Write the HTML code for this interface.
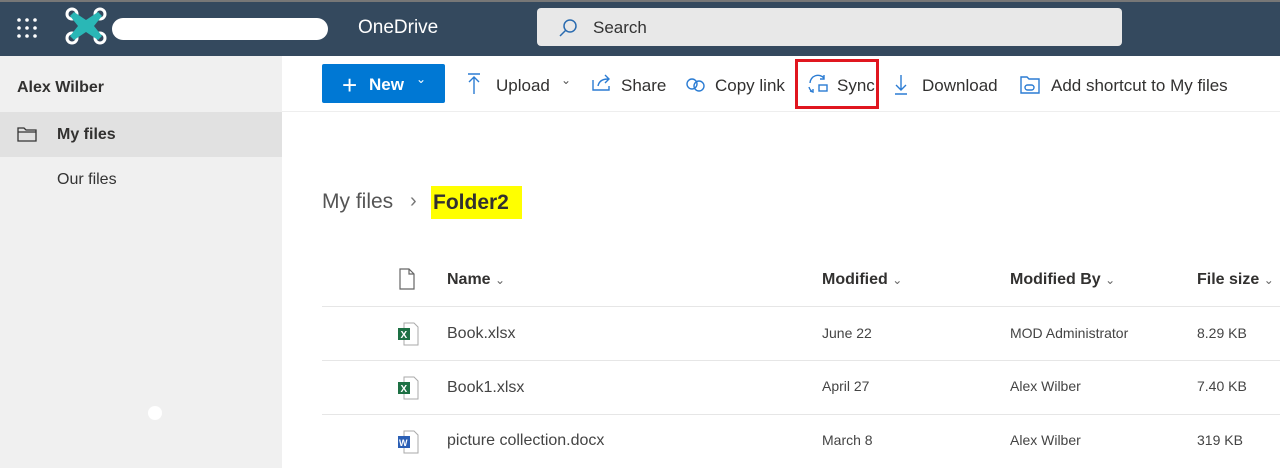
<!DOCTYPE html>
<html><head><style>
*{margin:0;padding:0;box-sizing:border-box}
body{width:1280px;height:468px;overflow:hidden;font-family:"Liberation Sans",sans-serif;background:#fff;position:relative;color:#323130}
.hdr{position:absolute;left:0;top:0;width:1280px;height:56px;background:#34495e;border-top:2px solid #777}
.abs{position:absolute;white-space:nowrap}
.side{position:absolute;left:0;top:56px;width:282px;height:412px;background:#f0f0f0}
.tb{font-size:17px;color:#323130}
.th{font-size:16px;font-weight:bold;color:#323130}
.td{font-size:14px;color:#444}
.line{position:absolute;left:322px;width:958px;height:1px;background:#e6e6e6}
</style></head><body>
<div class="hdr"></div>
<svg class="abs" style="left:16px;top:17px" width="22" height="22"><g fill="#fff"><circle cx="3" cy="3" r="1.8"/><circle cx="11" cy="3" r="1.8"/><circle cx="19" cy="3" r="1.8"/><circle cx="3" cy="11" r="1.8"/><circle cx="11" cy="11" r="1.8"/><circle cx="19" cy="11" r="1.8"/><circle cx="3" cy="19" r="1.8"/><circle cx="11" cy="19" r="1.8"/><circle cx="19" cy="19" r="1.8"/></g></svg>
<svg class="abs" style="left:64px;top:6px" width="44" height="40"><g fill="none" stroke="#fff" stroke-width="3"><circle cx="8" cy="8" r="5"/><circle cx="36" cy="8" r="5"/><circle cx="8" cy="32" r="5"/><circle cx="36" cy="32" r="5"/></g><path d="M10 6 L22 14 L34 6 L38 10 L30 20 L38 30 L34 34 L22 26 L10 34 L6 30 L14 20 L6 10Z" fill="#2ab7b6"/></svg>
<div class="abs" style="left:112px;top:18px;width:216px;height:22px;background:#fff;border-radius:11px"></div>
<div class="abs" style="left:358px;top:17px;font-size:19px;color:#fff">OneDrive</div>
<div class="abs" style="left:537px;top:8px;width:585px;height:38px;background:#e8e8e8;border-radius:4px"></div>
<svg class="abs" style="left:558px;top:18px" width="20" height="20"><circle cx="12" cy="8" r="6" fill="none" stroke="#2b6cb0" stroke-width="1.5"/><path d="M8 12 L2 18" stroke="#2b6cb0" stroke-width="1.5"/></svg>
<div class="abs" style="left:593px;top:18px;font-size:17px;color:#333">Search</div>

<div class="side"></div>
<div class="abs" style="left:17px;top:79px;font-size:16px;font-weight:bold;color:#323130">Alex Wilber</div>
<div class="abs" style="left:0;top:112px;width:282px;height:45px;background:#e1e1e1"></div>
<svg class="abs" style="left:17px;top:126px" width="20" height="16"><path d="M1 2h6l2 2h10v11H1z M1 6h18" fill="none" stroke="#333" stroke-width="1.3"/></svg>
<div class="abs" style="left:57px;top:126px;font-size:16px;font-weight:bold">My files</div>
<div class="abs" style="left:57px;top:171px;font-size:16px;color:#333">Our files</div>
<div class="abs" style="left:148px;top:406px;width:14px;height:14px;border-radius:50%;background:#fff"></div>

<div class="abs" style="left:322px;top:64px;width:123px;height:39px;background:#0078d4;border-radius:2px"></div>
<div class="abs" style="left:342px;top:70px;font-size:26px;color:#fff;font-weight:300">+</div>
<div class="abs" style="left:369px;top:75px;font-size:17px;color:#fff;font-weight:bold">New</div>
<div class="abs" style="left:416px;top:72px;font-size:12px;color:#fff">⌄</div>
<div class="line" style="top:111px;left:282px;width:998px;background:#eee"></div>

<svg class="abs" style="left:466px;top:73px" width="16" height="22"><path d="M2 1h12M8 4v17M3 9l5-5 5 5" fill="none" stroke="#2b7cd3" stroke-width="1.4"/></svg>
<div class="abs tb" style="left:496px;top:76px">Upload</div>
<div class="abs" style="left:561px;top:73px;font-size:12px;color:#555">⌄</div>
<svg class="abs" style="left:591px;top:74px" width="22" height="18"><path d="M2 6v10h16v-4M7 12c1-5 5-7 10-7M14 1l4 4-4 4" fill="none" stroke="#2b7cd3" stroke-width="1.4"/></svg>
<div class="abs tb" style="left:621px;top:76px">Share</div>
<svg class="abs" style="left:684px;top:77px" width="24" height="16"><circle cx="8" cy="7" r="5" fill="none" stroke="#2b7cd3" stroke-width="1.4"/><circle cx="15" cy="9" r="5" fill="none" stroke="#2b7cd3" stroke-width="1.4"/></svg>
<div class="abs tb" style="left:715px;top:76px">Copy link</div>
<div class="abs" style="left:795px;top:59px;width:84px;height:50px;border:3px solid #e0161f"></div>
<svg class="abs" style="left:806px;top:73px" width="24" height="22"><path d="M4 10a8 8 0 0 1 14-5M18 2v4h-4M3 14a8 8 0 0 0 4 5M4 18l3 1 0-3" fill="none" stroke="#2b7cd3" stroke-width="1.4"/><rect x="13" y="12" width="8" height="6" fill="none" stroke="#2b7cd3" stroke-width="1.4"/></svg>
<div class="abs tb" style="left:837px;top:76px">Sync</div>
<svg class="abs" style="left:893px;top:74px" width="16" height="22"><path d="M8 1v15M3 11l5 5 5-5M2 20h12" fill="none" stroke="#2b7cd3" stroke-width="1.4"/></svg>
<div class="abs tb" style="left:922px;top:76px">Download</div>
<svg class="abs" style="left:1019px;top:74px" width="24" height="22"><path d="M2 3h6l2 2h10v14H2z" fill="none" stroke="#2b7cd3" stroke-width="1.4"/><rect x="6" y="11" width="9" height="5" rx="2.5" fill="none" stroke="#2b7cd3" stroke-width="1.4"/></svg>
<div class="abs tb" style="left:1051px;top:76px">Add shortcut to My files</div>

<div class="abs" style="left:322px;top:190px;font-size:21px;color:#555">My files</div>
<div class="abs" style="left:410px;top:190px;font-size:20px;color:#777">›</div>
<div class="abs" style="left:431px;top:186px;width:91px;height:33px;background:#ffff00"></div>
<div class="abs" style="left:433px;top:191px;font-size:21px;font-weight:bold;color:#323130">Folder2</div>

<svg class="abs" style="left:398px;top:268px" width="18" height="22"><path d="M2 1h9l5 5v15H2z M11 1v5h5" fill="none" stroke="#666" stroke-width="1.2"/></svg>
<div class="abs th" style="left:447px;top:271px">Name <span style="font-weight:normal;font-size:12px;color:#666">⌄</span></div>
<div class="abs th" style="left:822px;top:271px">Modified <span style="font-weight:normal;font-size:12px;color:#666">⌄</span></div>
<div class="abs th" style="left:1010px;top:271px">Modified By <span style="font-weight:normal;font-size:12px;color:#666">⌄</span></div>
<div class="abs th" style="left:1197px;top:271px">File size <span style="font-weight:normal;font-size:12px;color:#666">⌄</span></div>
<div class="line" style="top:306px"></div>

<svg class="abs" style="left:397px;top:322px" width="22" height="24"><path d="M7 1h10l4 4v18H7z" fill="#fff" stroke="#aaa"/><rect x="1" y="6" width="12" height="12" fill="#1d7044"/><text x="3.5" y="16" font-size="10" fill="#fff" font-family="Liberation Sans" font-weight="bold">X</text></svg>
<div class="abs" style="left:447px;top:325px;font-size:16px;color:#444">Book.xlsx</div>
<div class="abs td" style="left:822px;top:325px">June 22</div>
<div class="abs td" style="left:1010px;top:325px">MOD Administrator</div>
<div class="abs td" style="left:1197px;top:325px">8.29 KB</div>
<div class="line" style="top:360px"></div>

<svg class="abs" style="left:397px;top:376px" width="22" height="24"><path d="M7 1h10l4 4v18H7z" fill="#fff" stroke="#aaa"/><rect x="1" y="6" width="12" height="12" fill="#1d7044"/><text x="3.5" y="16" font-size="10" fill="#fff" font-family="Liberation Sans" font-weight="bold">X</text></svg>
<div class="abs" style="left:447px;top:379px;font-size:16px;color:#444">Book1.xlsx</div>
<div class="abs td" style="left:822px;top:378px">April 27</div>
<div class="abs td" style="left:1010px;top:378px">Alex Wilber</div>
<div class="abs td" style="left:1197px;top:378px">7.40 KB</div>
<div class="line" style="top:414px"></div>

<svg class="abs" style="left:397px;top:430px" width="22" height="24"><path d="M7 1h10l4 4v18H7z" fill="#fff" stroke="#aaa"/><rect x="1" y="6" width="12" height="12" fill="#2b5fb5"/><text x="2" y="16" font-size="9" fill="#fff" font-family="Liberation Sans" font-weight="bold">W</text></svg>
<div class="abs" style="left:447px;top:432px;font-size:16px;color:#444">picture collection.docx</div>
<div class="abs td" style="left:822px;top:432px">March 8</div>
<div class="abs td" style="left:1010px;top:432px">Alex Wilber</div>
<div class="abs td" style="left:1197px;top:432px">319 KB</div>
</body></html>
